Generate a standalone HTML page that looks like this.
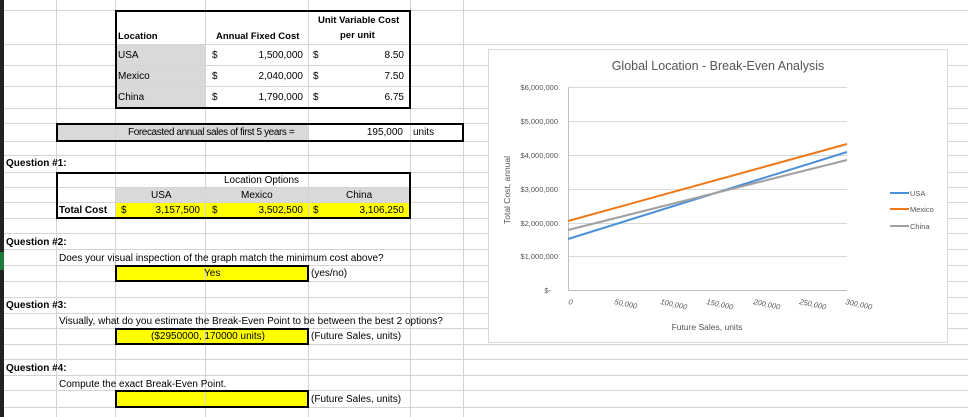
<!DOCTYPE html>
<html><head><meta charset="utf-8"><style>
body{margin:0;width:968px;height:417px;overflow:hidden;background:#fff;font-family:"Liberation Sans",sans-serif;font-size:10px;color:#000;position:relative}
.h{position:absolute;left:0;width:968px;height:1px;background:#d4d4d4}
.v{position:absolute;top:0;height:417px;width:1px;background:#d4d4d4}
.a{position:absolute;white-space:nowrap;margin-top:1px}
.box{position:absolute;border:2px solid #000;box-sizing:border-box}
.f{position:absolute}
b{font-weight:bold}
</style></head><body>
<div class="f" style="left:115px;top:44px;width:90px;height:64px;background:#d9d9d9"></div>
<div class="f" style="left:56px;top:123px;width:252px;height:18px;background:#d9d9d9"></div>
<div class="f" style="left:115px;top:187px;width:295px;height:15px;background:#d9d9d9"></div>
<div class="f" style="left:115px;top:202px;width:295px;height:16px;background:#ffff00"></div>
<div class="f" style="left:115px;top:265px;width:193px;height:16px;background:#ffff00"></div>
<div class="f" style="left:115px;top:328px;width:193px;height:16px;background:#ffff00"></div>
<div class="f" style="left:115px;top:390px;width:193px;height:17px;background:#ffff00"></div>

<div class="h" style="top:10px"></div><div class="h" style="top:44px"></div><div class="h" style="top:65px"></div><div class="h" style="top:86px"></div><div class="h" style="top:108px"></div><div class="h" style="top:123px"></div><div class="h" style="top:141px"></div><div class="h" style="top:155px"></div><div class="h" style="top:172px"></div><div class="h" style="top:187px"></div><div class="h" style="top:202px"></div><div class="h" style="top:218px"></div><div class="h" style="top:233px"></div><div class="h" style="top:249px"></div><div class="h" style="top:265px"></div><div class="h" style="top:281px"></div><div class="h" style="top:297px"></div><div class="h" style="top:313px"></div><div class="h" style="top:328px"></div><div class="h" style="top:344px"></div><div class="h" style="top:359px"></div><div class="h" style="top:375px"></div><div class="h" style="top:390px"></div><div class="h" style="top:407px"></div>
<div class="v" style="left:56px"></div><div class="v" style="left:115px"></div><div class="v" style="left:205px"></div><div class="v" style="left:308px"></div><div class="v" style="left:410px"></div><div class="v" style="left:463px"></div>
<div class="f" style="left:0;top:0;width:4px;height:417px;background:#222"></div>
<div class="f" style="left:0;top:252px;width:4px;height:18px;background:#1e7a3c"></div>

<div class="box" style="left:115px;top:10px;width:296px;height:99px"></div>
<div class="box" style="left:56px;top:123px;width:408px;height:19px"></div>
<div class="box" style="left:56px;top:172px;width:355px;height:47px"></div>
<div class="box" style="left:115px;top:265px;width:194px;height:17px"></div>
<div class="box" style="left:115px;top:328px;width:194px;height:17px"></div>
<div class="box" style="left:115px;top:390px;width:194px;height:18px"></div>

<div class="a" style="left:318px;top:14px;font-size:9.5px"><b>Unit Variable Cost</b></div>
<div class="a" style="left:340px;top:29px;font-size:9.5px"><b>per unit</b></div>
<div class="a" style="left:118px;top:30px;font-size:9.5px"><b>Location</b></div>
<div class="a" style="left:216px;top:30px;font-size:9.5px"><b>Annual Fixed Cost</b></div>
<div class="a" style="left:118px;top:49px">USA</div>
<div class="a" style="left:118px;top:70px">Mexico</div>
<div class="a" style="left:118px;top:91px">China</div>
<div class="a" style="left:212px;top:49px">$</div><div class="a" style="right:665px;top:49px">1,500,000</div><div class="a" style="left:313px;top:49px">$</div><div class="a" style="right:564px;top:49px">8.50</div>
<div class="a" style="left:212px;top:70px">$</div><div class="a" style="right:665px;top:70px">2,040,000</div><div class="a" style="left:313px;top:70px">$</div><div class="a" style="right:564px;top:70px">7.50</div>
<div class="a" style="left:212px;top:91px">$</div><div class="a" style="right:665px;top:91px">1,790,000</div><div class="a" style="left:313px;top:91px">$</div><div class="a" style="right:564px;top:91px">6.75</div>
<div class="a" style="left:128px;top:126px;letter-spacing:-0.4px">Forecasted annual sales of first 5 years =</div>
<div class="a" style="right:565px;top:126px">195,000</div><div class="a" style="left:413px;top:126px">units</div>
<div class="a" style="left:6px;top:157px"><b>Question #1:</b></div>
<div class="a" style="left:224px;top:174px">Location Options</div>
<div class="a" style="left:151px;top:189px">USA</div><div class="a" style="left:241px;top:189px">Mexico</div><div class="a" style="left:346px;top:189px">China</div>
<div class="a" style="left:59px;top:204px"><b>Total Cost</b></div>
<div class="a" style="left:121px;top:204px">$</div><div class="a" style="right:768px;top:204px">3,157,500</div><div class="a" style="left:212px;top:204px">$</div><div class="a" style="right:665px;top:204px">3,502,500</div><div class="a" style="left:313px;top:204px">$</div><div class="a" style="right:564px;top:204px">3,106,250</div>
<div class="a" style="left:6px;top:236px"><b>Question #2:</b></div>
<div class="a" style="left:59px;top:252px">Does your visual inspection of the graph match the minimum cost above?</div>
<div class="a" style="left:204px;top:267px">Yes</div><div class="a" style="left:311px;top:267px">(yes/no)</div>
<div class="a" style="left:6px;top:299px"><b>Question #3:</b></div>
<div class="a" style="left:59px;top:315px">Visually, what do you estimate the Break-Even Point to be between the best 2 options?</div>
<div class="a" style="left:151px;top:330px">($2950000, 170000 units)</div><div class="a" style="left:311px;top:330px">(Future Sales, units)</div>
<div class="a" style="left:6px;top:362px"><b>Question #4:</b></div>
<div class="a" style="left:59px;top:378px">Compute the exact Break-Even Point.</div>
<div class="a" style="left:311px;top:393px">(Future Sales, units)</div>

<div class="f" style="left:488px;top:49px;width:460px;height:294px;background:#fff;border:1px solid #d9d9d9;box-sizing:border-box"></div>
<svg class="f" style="left:0;top:0" width="968" height="417" font-family="Liberation Sans, sans-serif">
<g stroke="#d9d9d9" stroke-width="1">
<line x1="568" y1="87.5" x2="847" y2="87.5"/><line x1="568" y1="121.5" x2="847" y2="121.5"/><line x1="568" y1="155.5" x2="847" y2="155.5"/><line x1="568" y1="189.5" x2="847" y2="189.5"/><line x1="568" y1="223.5" x2="847" y2="223.5"/><line x1="568" y1="256.5" x2="847" y2="256.5"/>
<line x1="568" y1="290.5" x2="847" y2="290.5" stroke="#bfbfbf"/><line x1="568.5" y1="87" x2="568.5" y2="290" stroke="#bfbfbf"/>
</g>
<text x="718" y="70" font-size="12.5" fill="#555" text-anchor="middle">Global Location - Break-Even Analysis</text>
<g font-size="7.5" fill="#555" text-anchor="end">
<text x="558" y="90">$6,000,000</text><text x="558" y="124">$5,000,000</text><text x="558" y="158">$4,000,000</text><text x="558" y="192">$3,000,000</text><text x="558" y="226">$2,000,000</text><text x="558" y="259">$1,000,000</text><text x="551" y="293">$-</text>
</g>
<text transform="translate(510,190) rotate(-90)" font-size="8.5" fill="#555" text-anchor="middle">Total Cost, annual</text>
<g font-size="7.5" fill="#555" font-style="italic">
<text transform="translate(568,304) rotate(12)">0</text>
<text transform="translate(614,304) rotate(12)">50,000</text>
<text transform="translate(660,304) rotate(12)">100,000</text>
<text transform="translate(706,304) rotate(12)">150,000</text>
<text transform="translate(753,304) rotate(12)">200,000</text>
<text transform="translate(799,304) rotate(12)">250,000</text>
<text transform="translate(845,304) rotate(12)">300,000</text>
</g>
<text x="707" y="330" font-size="8.5" fill="#555" text-anchor="middle">Future Sales, units</text>
<line x1="568" y1="239" x2="847" y2="152" stroke="#4a90d9" stroke-width="2"/>
<line x1="568" y1="221" x2="847" y2="144" stroke="#f07818" stroke-width="2"/>
<line x1="568" y1="230" x2="847" y2="160" stroke="#a0a0a0" stroke-width="2"/>
<line x1="890" y1="193" x2="909" y2="193" stroke="#4a90d9" stroke-width="2"/><text x="910" y="196" font-size="7.5" fill="#555">USA</text>
<line x1="890" y1="209" x2="909" y2="209" stroke="#f07818" stroke-width="2"/><text x="910" y="212" font-size="7.5" fill="#555">Mexico</text>
<line x1="890" y1="226" x2="909" y2="226" stroke="#a0a0a0" stroke-width="2"/><text x="910" y="229" font-size="7.5" fill="#555">China</text>
</svg>
</body></html>
